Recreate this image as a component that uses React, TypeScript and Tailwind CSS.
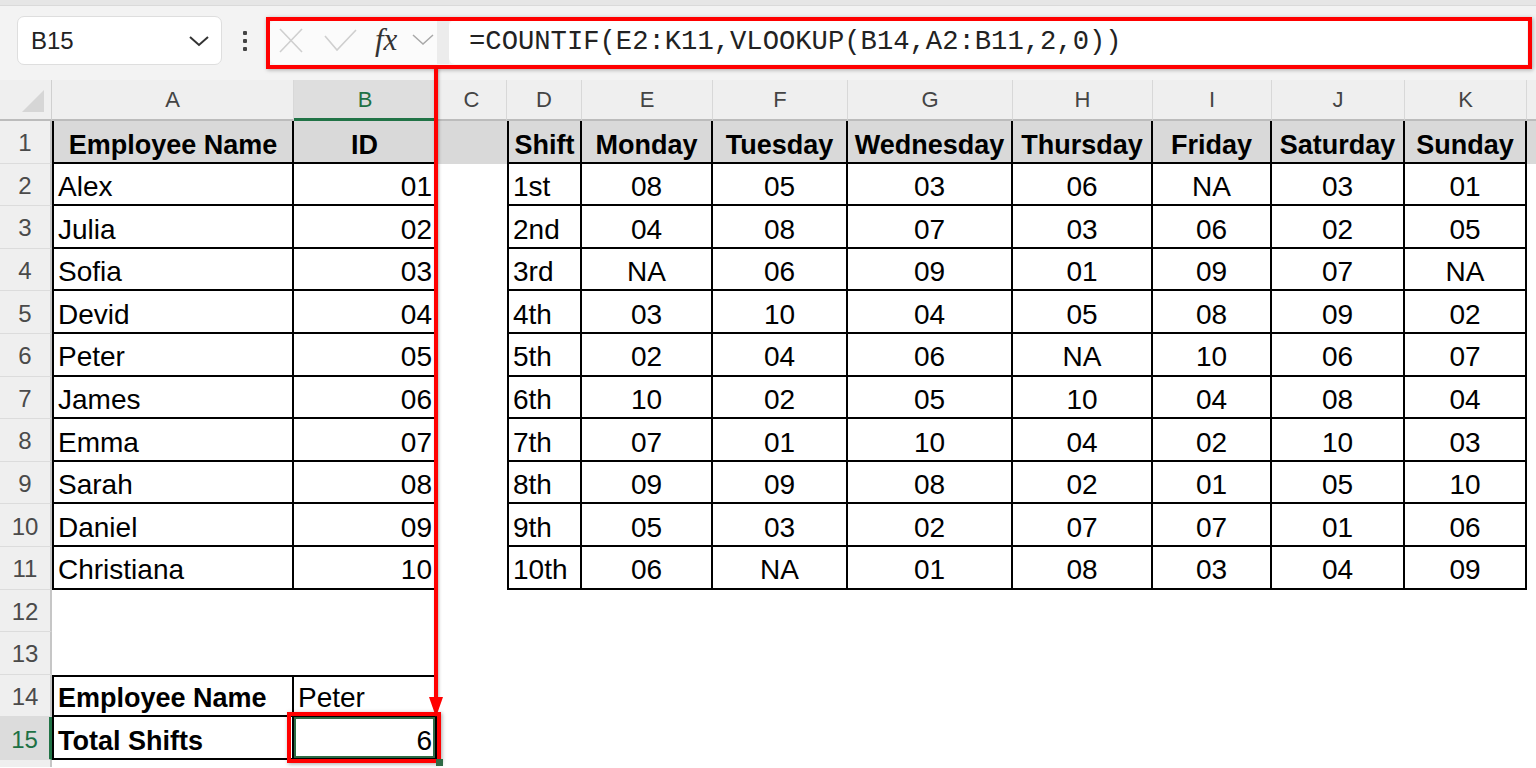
import React from "react";
import clsx from "clsx";

const COLS = ["A", "B", "C", "D", "E", "F", "G", "H", "I", "J", "K"];
const names = ["Alex", "Julia", "Sofia", "Devid", "Peter", "James", "Emma", "Sarah", "Daniel", "Christiana"];
const days = ["Shift", "Monday", "Tuesday", "Wednesday", "Thursday", "Friday", "Saturday", "Sunday"];
const shifts = [
  ["1st", "08", "05", "03", "06", "NA", "03", "01"],
  ["2nd", "04", "08", "07", "03", "06", "02", "05"],
  ["3rd", "NA", "06", "09", "01", "09", "07", "NA"],
  ["4th", "03", "10", "04", "05", "08", "09", "02"],
  ["5th", "02", "04", "06", "NA", "10", "06", "07"],
  ["6th", "10", "02", "05", "10", "04", "08", "04"],
  ["7th", "07", "01", "10", "04", "02", "10", "03"],
  ["8th", "09", "09", "08", "02", "01", "05", "10"],
  ["9th", "05", "03", "02", "07", "07", "01", "06"],
  ["10th", "06", "NA", "01", "08", "03", "04", "09"],
];

type CellDef = {
  text?: string;
  align?: "l" | "c" | "r";
  bold?: boolean;
  fill?: boolean;
  border?: boolean;
  bl?: boolean;
  bt?: boolean;
  selected?: boolean;
};

function Cell({ text, align = "l", bold, fill, border, bl, bt, selected }: CellDef) {
  return (
    <div
      className={clsx(
        "relative flex items-end whitespace-nowrap overflow-visible text-black leading-[1.15]",
        border && "border-r-2 border-b-2 border-black",
        bl && "border-l-2",
        bt && "border-t-2",
        fill ? "bg-[#d9d9d9]" : "bg-white",
        align === "c" && "justify-center",
        align === "r" && "justify-end pr-[3px]",
        align === "l" && "pl-[4px]",
        bold ? "font-bold text-[27px] pb-[1px]" : "text-[28px] pb-[1px]",
        selected && "shadow-[inset_0_0_0_2px_#2e6b45]"
      )}
    >
      {text}
    </div>
  );
}

function rowCells(r: number): CellDef[] {
  const cells: CellDef[] = [];
  if (r === 1) {
    cells.push({ text: "Employee Name", align: "c", bold: true, fill: true, border: true, bl: true });
    cells.push({ text: "ID", align: "c", bold: true, fill: true, border: true });
    cells.push({ fill: true });
    days.forEach((d, i) =>
      cells.push({ text: d, align: "c", bold: true, fill: true, border: true, bl: i === 0 })
    );
    cells.push({ fill: true });
    return cells;
  }
  if (r >= 2 && r <= 11) {
    const i = r - 2;
    cells.push({ text: names[i], align: "l", border: true, bl: true });
    cells.push({ text: String(i + 1).padStart(2, "0"), align: "r", border: true });
    cells.push({});
    shifts[i].forEach((v, j) =>
      cells.push({ text: v, align: j === 0 ? "l" : "c", border: true, bl: j === 0 })
    );
    cells.push({});
    return cells;
  }
  if (r === 14) {
    cells.push({ text: "Employee Name", align: "l", bold: true, border: true, bl: true, bt: true });
    cells.push({ text: "Peter", align: "l", border: true, bt: true });
  } else if (r === 15) {
    cells.push({ text: "Total Shifts", align: "l", bold: true, border: true, bl: true });
    cells.push({ text: "6", align: "r", border: true, selected: true });
  } else {
    cells.push({});
    cells.push({});
  }
  for (let k = 0; k < 10; k++) cells.push({});
  return cells;
}

export default function App() {
  const rows = Array.from({ length: 15 }, (_, i) => i + 1);
  return (
    <div className="relative w-[1536px] h-[768px] overflow-hidden bg-white font-['Liberation_Sans',Arial,sans-serif]">
      {/* Formula bar area */}
      <div className="h-[80px] bg-[#f3f3f3] relative">
        <div className="h-[6px] bg-[#e6e6e6] border-b border-[#dadada]" />
        <div className="flex items-start pt-[10px]">
          {/* Name box */}
          <div className="ml-[17px] w-[205px] h-[49px] bg-white rounded-[7px] border border-[#dedede] flex items-center justify-between pl-[13px] pr-[11px]">
            <span className="text-[24px] text-[#222]">B15</span>
            <svg width="22" height="12" viewBox="0 0 22 12">
              <polyline points="2,2 11,10 20,2" fill="none" stroke="#333" strokeWidth="2" />
            </svg>
          </div>
          {/* dots */}
          <div className="w-[45px] h-[49px] flex flex-col items-center justify-center gap-[4px]">
            <div className="w-[4px] h-[4px] bg-[#444] rounded-[1px]" />
            <div className="w-[4px] h-[4px] bg-[#444] rounded-[1px]" />
            <div className="w-[4px] h-[4px] bg-[#444] rounded-[1px]" />
          </div>
          {/* controls */}
          <div className="ml-[3px] mt-[4px] w-[167px] h-[44px] bg-[#fbfbfb] rounded-l-[6px] relative">
            <svg className="absolute left-0 top-0" width="167" height="44" viewBox="0 0 167 44">
              <line x1="10" y1="9" x2="32" y2="32" stroke="#cfcfcf" strokeWidth="1.6" />
              <line x1="32" y1="9" x2="10" y2="32" stroke="#cfcfcf" strokeWidth="1.6" />
              <polyline points="55,16 67,30 86,10" fill="none" stroke="#cfcfcf" strokeWidth="1.6" />
              <polyline points="143,15 153,24 163,15" fill="none" stroke="#a8a8a8" strokeWidth="1.5" />
            </svg>
            <span className="absolute left-[105px] top-[2px] font-['Liberation_Serif',serif] italic text-[31px] text-[#333] leading-[1.15]">
              fx
            </span>
          </div>
          <div className="w-[12px] h-[44px] mt-[4px] bg-[#ececec]" />
          {/* input */}
          <div className="mt-[4px] w-[1078px] h-[44px] bg-white rounded-l-[6px] flex items-center pl-[20px]">
            <span className="font-['Liberation_Mono',monospace] text-[27.2px] text-[#222] leading-none">
              =COUNTIF(E2:K11,VLOOKUP(B14,A2:B11,2,0))
            </span>
          </div>
        </div>
      </div>

      {/* Sheet grid */}
      <div className="grid grid-cols-[52px_242px_143px_70px_75px_131px_135px_165px_140px_119px_133px_122px_9px] grid-rows-[41px_repeat(15,42.6px)_7px]">
        {/* corner */}
        <div className="relative bg-[#efefef] border-r border-b-2 border-r-[#d0d0d0] border-b-[#bcbcbc]">
          <svg className="absolute left-[20px] top-[8px]" width="26" height="26" viewBox="0 0 26 26">
            <polygon points="24,2 24,24 2,24" fill="#d6d6d6" />
          </svg>
        </div>
        {COLS.map((c) => (
          <div
            key={c}
            className={clsx(
              "flex items-center justify-center text-[22px] border-r border-r-[#d8d8d8]",
              c === "B"
                ? "bg-[#dedede] text-[#1e7145] border-b-[3px] border-b-[#217346]"
                : "bg-[#efefef] text-[#444] border-b-2 border-b-[#bcbcbc]"
            )}
          >
            {c}
          </div>
        ))}
        <div className="bg-[#efefef] border-b-2 border-b-[#bcbcbc]" />

        {rows.map((r) => (
          <React.Fragment key={r}>
            <div
              className={clsx(
                "flex items-center justify-center pt-[3px] text-[24px] border-b border-b-[#dcdcdc]",
                r === 15
                  ? "bg-[#dcdcdc] text-[#1e7145] border-r-[3px] border-r-[#217346]"
                  : "bg-[#efefef] text-[#4a4a4a] border-r-2 border-r-[#c6c6c6]"
              )}
            >
              {r}
            </div>
            {rowCells(r).map((cell, i) => (
              <Cell key={i} {...cell} />
            ))}
          </React.Fragment>
        ))}
        <div className="bg-[#efefef] border-r-2 border-r-[#c6c6c6]" />
        {Array.from({ length: 12 }).map((_, i) => (
          <div key={i} className="bg-white" />
        ))}
      </div>

      {/* Red annotation overlays */}
      <div className="absolute left-[266px] top-[17px] w-[1266px] h-[52px] border-4 border-[#ff0000] shadow-[1px_1px_4px_rgba(0,0,0,0.3)]" />
      <div className="absolute left-[434px] top-[69px] w-[4px] h-[632px] bg-[#ff0000] shadow-[1px_0_3px_rgba(0,0,0,0.3)]" />
      <svg className="absolute left-[428px] top-[697px]" width="16" height="20" viewBox="0 0 16 20">
        <polygon points="1,0 15,0 8,20" fill="#ff0000" />
      </svg>
      <div className="absolute left-[287px] top-[712px] w-[154px] h-[51px] border-4 border-[#ff0000] shadow-[1px_1px_4px_rgba(0,0,0,0.35)]" />
      <div className="absolute left-[436px] top-[759px] w-[7px] h-[7px] bg-[#2e6b45]" />
    </div>
  );
}
